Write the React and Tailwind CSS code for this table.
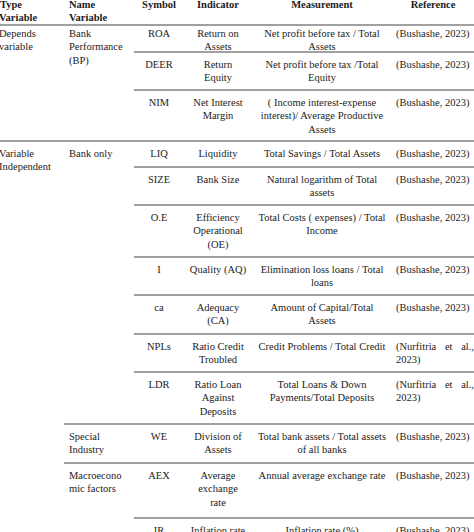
import React from "react";

const L = ({ lines }) => (
  <>
    {lines.map((t, i) => (
      <div key={i} className="whitespace-nowrap">{t}</div>
    ))}
  </>
);

const Ref = ({ nur }) =>
  nur ? (
    <div>
      <div className="flex justify-between whitespace-nowrap">
        <span>(Nurfitria</span>
        <span>et</span>
        <span>al.,</span>
      </div>
      <div>2023)</div>
    </div>
  ) : (
    <div className="whitespace-nowrap">(Bushashe, 2023)</div>
  );

const rows = [
  { sym: "ROA", ind: ["Return on", "Assets"], meas: ["Net profit before tax / Total", "Assets"], pt: "pt-[1px]" },
  { sym: "DEER", ind: ["Return", "Equity"], meas: ["Net profit before tax /Total", "Equity"] },
  { sym: "NIM", ind: ["Net Interest", "Margin"], meas: ["( Income interest-expense", "interest)/ Average Productive", "Assets"] },
  { sym: "LIQ", ind: ["Liquidity"], meas: ["Total Savings / Total Assets"] },
  { sym: "SIZE", ind: ["Bank Size"], meas: ["Natural logarithm of Total", "assets"] },
  { sym: "O.E", ind: ["Efficiency", "Operational", "(OE)"], meas: ["Total Costs ( expenses) / Total", "Income"] },
  { sym: "I", ind: ["Quality (AQ)"], meas: ["Elimination loss loans / Total", "loans"] },
  { sym: "ca", ind: ["Adequacy", "(CA)"], meas: ["Amount of Capital/Total", "Assets"] },
  { sym: "NPLs", ind: ["Ratio Credit", "Troubled"], meas: ["Credit Problems / Total Credit"], nur: true },
  { sym: "LDR", ind: ["Ratio Loan", "Against", "Deposits"], meas: ["Total Loans & Down", "Payments/Total Deposits"], nur: true },
  { sym: "WE", ind: ["Division of", "Assets"], meas: ["Total bank assets / Total assets", "of all banks"] },
  { sym: "AEX", ind: ["Average", "exchange", "rate"], meas: ["Annual average exchange rate"] },
  { sym: "IR", ind: ["Inflation rate"], meas: ["Inflation rate (%)"] },
];

const line = "border-t-2 border-[#a0a0a0]";

export default function App() {
  const cells = [];
  rows.forEach((r, i) => {
    const pt = r.pt || "pt-[5px]";
    if (i === 0) {
      cells.push(
        <div key="c1a" className={`row-span-3 ${line} ${pt} -ml-px`}>
          <L lines={["Depends", "variable"]} />
        </div>,
        <div key="c2a" className={`row-span-3 ${line} ${pt} pl-[5px]`}>
          <L lines={["Bank", "Performance", "(BP)"]} />
        </div>
      );
    }
    if (i === 3) {
      cells.push(
        <div key="c1b" className={`row-span-10 ${line} ${pt} -ml-px`}>
          <L lines={["Variable", "Independent"]} />
        </div>,
        <div key="c2b" className={`row-span-7 ${line} ${pt} pl-[5px]`}>
          <L lines={["Bank only"]} />
        </div>
      );
    }
    if (i === 10) {
      cells.push(
        <div key="c2c" className={`${line} ${pt} pl-[5px]`}>
          <L lines={["Special", "Industry"]} />
        </div>
      );
    }
    if (i === 11) {
      cells.push(
        <div key="c2d" className={`row-span-2 ${line} ${pt} pl-[5px]`}>
          <L lines={["Macroecono", "mic factors"]} />
        </div>
      );
    }
    cells.push(
      <div key={`s${i}`} className={`${line} ${pt} text-center`}>{r.sym}</div>,
      <div key={`i${i}`} className={`${line} ${pt} text-center`}>
        <L lines={r.ind} />
      </div>,
      <div key={`m${i}`} className={`${line} ${pt} text-center`}>
        <L lines={r.meas} />
      </div>,
      <div key={`r${i}`} className={`${line} ${pt} pl-[4px]`}>
        <Ref nur={r.nur} />
      </div>
    );
  });

  return (
    <div className="w-[474px] h-[532px] overflow-hidden bg-white text-[#1c1c1c] text-[10.5px] leading-[13.4px] font-['Liberation_Serif','DejaVu_Serif',serif]">
      <div className="grid grid-cols-[64px_70px_50px_68px_140px_82px] grid-rows-[24px_27px_38px_51px_26px_38px_52px_38px_39px_38px_52px_39px_55px_40px]">
        <div className="font-bold -mt-[2px]">
          <div>Type</div>
          <div className="-ml-px">Variable</div>
        </div>
        <div className="font-bold -mt-[2px] pl-[5px]">
          <div>Name</div>
          <div>Variable</div>
        </div>
        <div className="font-bold -mt-[2px] text-center">Symbol</div>
        <div className="font-bold -mt-[2px] text-center">Indicator</div>
        <div className="font-bold -mt-[2px] text-center">Measurement</div>
        <div className="font-bold -mt-[2px] text-center">Reference</div>
        {cells}
      </div>
    </div>
  );
}
